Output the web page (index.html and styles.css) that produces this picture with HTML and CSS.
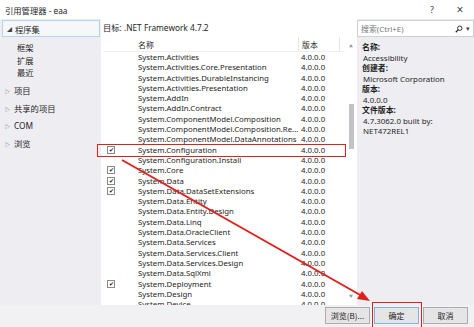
FILE: index.html
```html
<!DOCTYPE html>
<html lang="zh-CN">
<head>
    <meta charset="UTF-8">
    <title>引用管理器 - eaa</title>
    <link rel="stylesheet" href="styles.css">
</head>
<body>

    <div class="titlebar">
        <span class="title">引用管理器 - eaa</span>
        <span class="title-btn">?</span>
        <span class="title-btn close">×</span>
    </div>

    <div class="main">
        <div class="nav">
            <div class="nav-head"><span class="tri open">◢</span>程序集</div>
            <div class="nav-sub">框架</div>
            <div class="nav-sub">扩展</div>
            <div class="nav-sub">最近</div>
            <div class="nav-item"><span class="tri">▷</span>项目</div>
            <div class="nav-item"><span class="tri">▷</span>共享的项目</div>
            <div class="nav-item"><span class="tri">▷</span>COM</div>
            <div class="nav-item"><span class="tri">▷</span>浏览</div>
        </div>

        <div class="center">
            <div class="target">目标: .NET Framework 4.7.2</div>
            <div class="list">
                <div class="list-body">
                    <div class="list-head">
                        <span class="col-check"></span>
                        <span class="col-name">名称</span>
                        <span class="col-ver">版本</span>
                    </div>
                    <div id="rows"></div>
                </div>
                <div class="scrollbar">
                    <span class="arrow">▲</span>
                    <span class="thumb"></span>
                    <span class="arrow down">▼</span>
                </div>
            </div>
        </div>

        <div class="details">
            <div class="search">
                <span class="placeholder">搜索(Ctrl+E)</span>
                <span class="search-icon">
                    <svg width="8" height="8" viewBox="0 0 8 8"><circle cx="4.8" cy="3.2" r="2.2" fill="none" stroke="#333" stroke-width="1"/><line x1="3.2" y1="4.8" x2="0.8" y2="7.2" stroke="#333" stroke-width="1.3"/></svg>
                </span>
                <span class="drop">▾</span>
            </div>
            <div class="info">
                <div class="label">名称:</div>
                <div class="value">Accessibility</div>
                <div class="label">创建者:</div>
                <div class="value">Microsoft Corporation</div>
                <div class="label">版本:</div>
                <div class="value">4.0.0.0</div>
                <div class="label">文件版本:</div>
                <div class="value">4.7.3062.0 built by:<br>NET472REL1</div>
            </div>
        </div>
    </div>

    <div class="footer">
        <button class="btn">浏览(B)...</button>
        <button class="btn default">确定</button>
        <button class="btn">取消</button>
    </div>

    <div class="mark mark-row"></div>
    <div class="mark mark-ok"></div>
    <svg class="arrow-line" width="474" height="327" viewBox="0 0 474 327">
        <line x1="122" y1="160" x2="362" y2="296" stroke="#e0201c" stroke-width="2"/>
        <polygon points="370,301 357,299 362,291" fill="#e0201c"/>
    </svg>

    <script>
        const assemblies = [
            ["System.Activities", false],
            ["System.Activities.Core.Presentation", false],
            ["System.Activities.DurableInstancing", false],
            ["System.Activities.Presentation", false],
            ["System.AddIn", false],
            ["System.AddIn.Contract", false],
            ["System.ComponentModel.Composition", false],
            ["System.ComponentModel.Composition.Re...", false],
            ["System.ComponentModel.DataAnnotations", false],
            ["System.Configuration", true],
            ["System.Configuration.Install", false],
            ["System.Core", true],
            ["System.Data", true],
            ["System.Data.DataSetExtensions", true],
            ["System.Data.Entity", false],
            ["System.Data.Entity.Design", false],
            ["System.Data.Linq", false],
            ["System.Data.OracleClient", false],
            ["System.Data.Services", false],
            ["System.Data.Services.Client", false],
            ["System.Data.Services.Design", false],
            ["System.Data.SqlXml", false],
            ["System.Deployment", true],
            ["System.Design", false],
            ["System.Device", false]
        ];

        const rowsDiv = document.getElementById("rows");

        assemblies.forEach(item => {
            let row = document.createElement("div");
            row.className = "row";
            let check = document.createElement("span");
            check.className = "col-check";
            if (item[1]) {
                let box = document.createElement("span");
                box.className = "box";
                box.innerText = "✔";
                check.appendChild(box);
            }
            let name = document.createElement("span");
            name.className = "col-name";
            name.innerText = item[0];
            let ver = document.createElement("span");
            ver.className = "col-ver";
            ver.innerText = "4.0.0.0";
            row.appendChild(check);
            row.appendChild(name);
            row.appendChild(ver);
            rowsDiv.appendChild(row);
        });
    </script>

</body>
</html>
```

FILE: styles.css
```css
* {
    margin: 0;
    padding: 0;
    box-sizing: border-box;
}
body {
    width: 474px;
    height: 327px;
    overflow: hidden;
    position: relative;
    background-color: #ffffff;
    font-family: "Noto Sans", "Noto Sans CJK SC", sans-serif;
    font-size: 7.9px;
    color: #1e1e1e;
    display: flex;
    flex-direction: column;
}
.titlebar {
    height: 19px;
    display: flex;
    align-items: center;
    padding-left: 5px;
    background-color: #ffffff;
}
.title {
    flex-grow: 1;
    font-size: 8.3px;
}
.title-btn {
    width: 28px;
    text-align: center;
    font-size: 9px;
    color: #444;
}
.close {
    font-size: 12px;
}
.main {
    height: 286px;
    display: flex;
}
/* left category tree */
.nav {
    width: 101px;
    background-color: #eeeef2;
    padding-top: 1px;
    font-size: 8.3px;
}
.nav-head {
    height: 17px;
    margin-left: 2px;
    margin-right: 1px;
    border: 1px solid #b5d3f1;
    background-color: #f6f7fa;
    display: flex;
    align-items: center;
    padding-left: 4px;
}
.tri {
    font-size: 5px;
    width: 9px;
    color: #444;
}
.nav-head .tri {
    width: 8px;
}
.nav-sub {
    height: 12.5px;
    line-height: 12.5px;
    padding-left: 17px;
}
.nav-head + .nav-sub {
    margin-top: 5px;
}
.nav-item {
    height: 17.7px;
    display: flex;
    align-items: center;
    padding-left: 5px;
}
.nav-sub + .nav-item {
    margin-top: 2px;
}
/* middle list */
.center {
    width: 256px;
    display: flex;
    flex-direction: column;
    background-color: #ffffff;
}
.target {
    height: 18px;
    line-height: 18px;
    padding-left: 2px;
    font-size: 8.3px;
}
.list {
    flex-grow: 1;
    display: flex;
    margin-left: 2px;
    overflow: hidden;
}
.list-body {
    flex-grow: 1;
    overflow: hidden;
}
.list-head {
    height: 15px;
    display: flex;
    align-items: center;
    border-bottom: 1px solid #f0f0f0;
}
.list-head .col-ver {
    border-left: 1px solid #e5e5e5;
    border-right: 1px solid #e5e5e5;
    padding-left: 3px;
}
.row {
    height: 10.3px;
    display: flex;
    align-items: center;
    line-height: 10.3px;
    font-size: 7.8px;
}
.col-check {
    width: 35px;
    height: 100%;
    display: flex;
    align-items: center;
    padding-left: 4px;
}
.col-name {
    width: 160px;
    padding-right: 1px;
    white-space: nowrap;
    overflow: hidden;
}
.col-ver {
    width: 42px;
    height: 100%;
    display: flex;
    align-items: center;
    padding-left: 3px;
}
.box {
    width: 8px;
    height: 8px;
    border: 1px solid #8a8a8a;
    background-color: #ffffff;
    font-size: 6px;
    line-height: 6px;
    text-align: center;
    color: #222;
}
.scrollbar {
    width: 12px;
    display: flex;
    flex-direction: column;
    align-items: center;
    background-color: #ffffff;
}
.arrow {
    font-size: 4px;
    color: #999;
    margin-top: 6px;
}
.arrow.down {
    margin-top: auto;
    margin-bottom: 6px;
}
.thumb {
    width: 5px;
    height: 45px;
    margin-top: 55px;
    background-color: #c2c3c9;
}
/* right details */
.details {
    flex-grow: 1;
    background-color: #eeeef2;
}
.search {
    height: 17px;
    margin-top: 1px;
    background-color: #ffffff;
    border: 1px solid #cccedb;
    display: flex;
    align-items: center;
    padding-left: 3px;
}
.placeholder {
    flex-grow: 1;
    color: #777;
}
.search-icon {
    width: 8px;
    height: 8px;
    display: flex;
}
.drop {
    width: 10px;
    text-align: center;
    font-size: 7px;
    color: #444;
}
.info {
    padding: 5px 0 0 5px;
    line-height: 10.5px;
}
.label {
    font-weight: bold;
}
.value {
    padding-left: 1px;
}
/* bottom buttons */
.footer {
    flex-grow: 1;
    background-color: #f1f1f3;
    display: flex;
    justify-content: flex-end;
    align-items: flex-start;
    gap: 4px;
    padding: 2px 6px 0 0;
}
.btn {
    width: 45px;
    height: 17px;
    font-family: "Noto Sans CJK SC", sans-serif;
    font-size: 8px;
    background-color: #e5e5e5;
    border: 1px solid #adadad;
    color: #222;
}
.btn.default {
    border-color: #7eb4ea;
}
/* red annotations */
.mark {
    position: absolute;
    border: 1.5px solid #e0201c;
}
.mark-row {
    left: 97px;
    top: 144px;
    width: 249px;
    height: 13px;
}
.mark-ok {
    left: 372px;
    top: 302px;
    width: 50px;
    height: 26px;
}
.arrow-line {
    position: absolute;
    left: 0;
    top: 0;
    pointer-events: none;
}
```
